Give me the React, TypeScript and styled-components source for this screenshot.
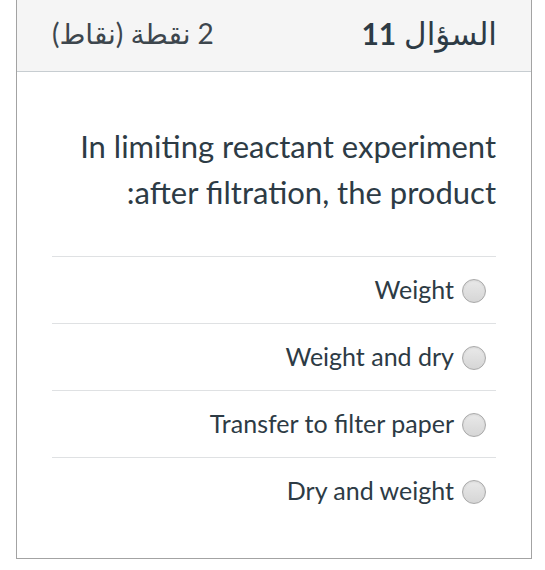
import React from "react";
import styled, { createGlobalStyle } from "styled-components";

const GlobalStyle = createGlobalStyle`
    html, body {
        margin: 0;
        padding: 0;
        background: #ffffff;
    }
    body {
        font-family: Lato, "DejaVu Sans", sans-serif;
        color: #2d3b45;
    }
`;

const options = [
    "Weight",
    "Weight and dry",
    "Transfer to filter paper",
    "Dry and weight",
];

const App = () => {
    return (
        <>
            <GlobalStyle />
            <Page>
                <Card dir="rtl">
                    <Header>
                        <Title>
                            السؤال <Num>11</Num>
                        </Title>
                        <Points>2 نقطة (نقاط)</Points>
                    </Header>
                    <Body>
                        <Question>
                            In limiting reactant experiment
                            <br />
                            after filtration, the product:
                        </Question>
                        <Answers>
                            {options.map((o) => (
                                <Answer key={o}>
                                    <Radio />
                                    <AnswerText>{o}</AnswerText>
                                </Answer>
                            ))}
                        </Answers>
                    </Body>
                </Card>
            </Page>
        </>
    );
};

const Page = styled.div`
    padding: 0 13px 0 16px;
    width: 516px;
`;

const Card = styled.div`
    border: 1px solid #a3a3a3;
    border-top: none;
    box-sizing: border-box;
    width: 516px;
    background: #fff;
`;

const Header = styled.div`
    display: flex;
    align-items: center;
    justify-content: space-between;
    height: 71px;
    padding: 0 34px 0 35px;
    background: #f5f5f5;
    border-bottom: 1px solid #c7cdd1;
`;

const Title = styled.div`
    font-size: 31px;
    font-weight: 400;
    color: #2d3b45;
    margin-top: -5px;
`;

const Num = styled.span`
    font-family: Lato, sans-serif;
    font-weight: 700;
    font-size: 30px;
`;

const Points = styled.div`
    font-size: 28px;
    color: #3d464d;
    margin-top: -5px;
`;

const Body = styled.div`
    padding: 51px 35px 34px 35px;
`;

const Question = styled.p`
    margin: 0 0 41px 0;
    font-size: 31px;
    line-height: 46px;
    color: #2d3b45;
    text-align: right;
`;

const Answers = styled.div`
    display: flex;
    flex-direction: column;
`;

const Answer = styled.label`
    display: flex;
    align-items: center;
    gap: 8px;
    height: 67px;
    padding: 0 10px 2px 0;
    box-sizing: border-box;
    border-top: 1px solid #dfe1e3;
`;

const Radio = styled.span`
    display: inline-block;
    width: 24px;
    height: 24px;
    box-sizing: border-box;
    border-radius: 50%;
    border: 1px solid #a9a9a9;
    background: linear-gradient(#e9e9e9, #d6d6d6);
    box-shadow: inset 0 1px 2px rgba(0, 0, 0, 0.08);
    flex-shrink: 0;
    margin-top: 4px;
`;

const AnswerText = styled.span`
    font-size: 25px;
    color: #2d3b45;
`;

export default App;
